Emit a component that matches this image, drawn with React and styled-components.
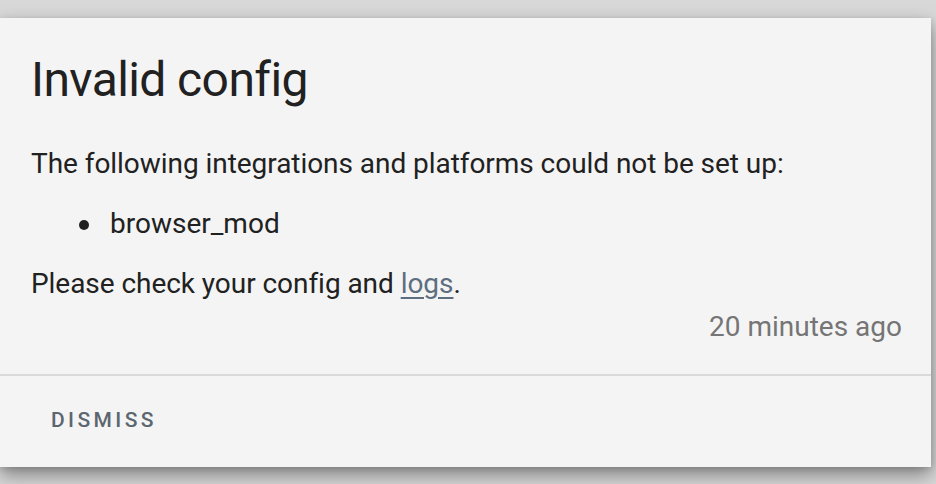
import React from "react";
import styled, { createGlobalStyle } from "styled-components";

const Global = createGlobalStyle`
  html, body {
    margin: 0;
    padding: 0;
    background: #d8d8d8;
    overflow: hidden;
  }
  body {
    width: 936px;
    height: 484px;
    font-family: Roboto, "Noto Sans", sans-serif;
  }
`;

const Stage = styled.div`
  width: 936px;
  height: 484px;
  padding-top: 18px;
  box-sizing: border-box;
  overflow: hidden;
`;

const Card = styled.section`
  width: 931px;
  height: 449px;
  box-sizing: border-box;
  background: #f4f4f4;
  box-shadow: 0 8px 18px rgba(0, 0, 0, 0.4), 0 2px 6px rgba(0, 0, 0, 0.12);
  display: flex;
  flex-direction: column;
`;

const Content = styled.div`
  padding: 30px 29px 0 31px;
  color: #212121;
`;

const Title = styled.h1`
  margin: 0;
  font-size: 48px;
  line-height: 64px;
  font-weight: 400;
  letter-spacing: -0.6px;
  color: #212121;
`;

const Text = styled.p`
  margin: ${(p) => p.$top || 0}px 0 0;
  font-size: 28px;
  line-height: 40px;
  letter-spacing: -0.05px;
`;

const List = styled.ul`
  margin: 20px 0 0;
  padding-left: 79px;
  list-style: none;
  font-size: 28px;
  line-height: 40px;
`;

const Item = styled.li`
  position: relative;
  &::before {
    content: "";
    position: absolute;
    left: -31px;
    top: 16px;
    width: 10px;
    height: 10px;
    border-radius: 50%;
    background: #212121;
  }
`;

const Link = styled.a`
  color: #5d6e80;
  text-decoration: underline;
  text-underline-offset: 4px;
`;

const Time = styled.div`
  margin-top: 3px;
  text-align: right;
  font-size: 28px;
  line-height: 40px;
  color: #757575;
`;

const Actions = styled.div`
  margin-top: 27px;
  border-top: 2px solid #dadada;
  display: flex;
  padding: 0 0 0 51px;
`;

const Button = styled.button`
  border: 0;
  background: none;
  padding: 0;
  margin-top: 32px;
  font-family: Roboto, sans-serif;
  font-size: 21px;
  line-height: 24px;
  font-weight: 500;
  letter-spacing: 3.4px;
  color: #5c6671;
  text-transform: uppercase;
`;

export default function App() {
  return (
    <Stage>
      <Global />
      <Card>
        <Content>
          <Title>Invalid config</Title>
          <Text $top={32}>The following integrations and platforms could not be set up:</Text>
          <List>
            <Item>browser_mod</Item>
          </List>
          <Text $top={20}>
            Please check your config and <Link href="#">logs</Link>.
          </Text>
          <Time>20 minutes ago</Time>
        </Content>
        <Actions>
          <Button>Dismiss</Button>
        </Actions>
      </Card>
    </Stage>
  );
}
